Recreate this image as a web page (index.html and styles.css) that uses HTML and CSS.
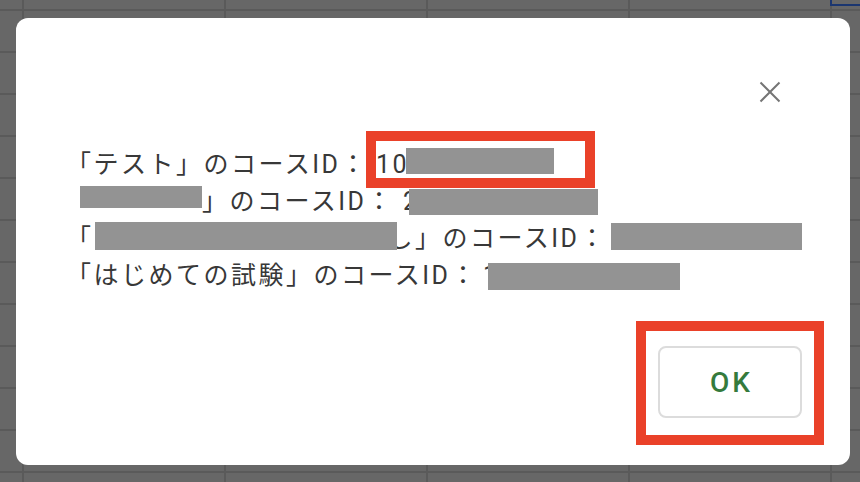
FILE: index.html
```html
<!DOCTYPE html>
<html lang="ja">
<head>
<meta charset="utf-8">
<title>コースID</title>
<link rel="stylesheet" href="styles.css">
</head>
<body>
<div class="screen">
  <div class="selection"></div>
  <div class="dialog">
    <div class="header">
      <button class="close" aria-label="閉じる">
        <svg width="22" height="22" viewBox="0 0 22 22"><path d="M1.5 1.5L20.5 20.5M20.5 1.5L1.5 20.5" stroke="#757575" stroke-width="2" fill="none"/></svg>
      </button>
    </div>
    <div class="content">
      <div class="line line-marked">「テスト」のコースID：<span class="id id1">10</span><span class="redact r1"></span><span class="mark"></span></div>
      <div class="line"><span class="redact r2a"></span>」のコースID：<span class="id id2">2</span><span class="redact r2b"></span></div>
      <div class="line">「<span class="redact r3a"></span>し」のコースID：<span class="redact r3b"></span></div>
      <div class="line">「はじめての試験」のコースID：<span class="id id4">1</span><span class="redact r4"></span></div>
    </div>
    <div class="footer">
      <div class="mark-box">
        <button class="ok">OK</button>
      </div>
    </div>
  </div>
</div>
</body>
</html>
```

FILE: styles.css
```css
* { box-sizing: border-box; }
html, body { margin: 0; padding: 0; }
body { width: 860px; height: 482px; overflow: hidden; }

.screen {
  position: relative;
  width: 860px;
  height: 482px;
  padding: 18px 10px 17px 16px;
  background:
    repeating-linear-gradient(to bottom, transparent 0 9px, #5a5a5a 9px 11px, transparent 11px 42px),
    repeating-linear-gradient(to right, transparent 0 22px, #5a5a5a 22px 24px, transparent 24px 202px),
    #676767;
  overflow: hidden;
}

.selection {
  position: absolute;
  left: 830px;
  top: -30px;
  width: 60px;
  height: 36px;
  border: 2.5px solid #1b3670;
}

.dialog {
  height: 447px;
  background: #fff;
  border-radius: 12px;
  display: flex;
  flex-direction: column;
}

.header {
  display: flex;
  justify-content: flex-end;
  padding: 63px 69px 0 0;
}
.close {
  width: 22px;
  height: 22px;
  padding: 0;
  margin: 0;
  border: 0;
  background: none;
  display: block;
}
.close svg { display: block; }

.content {
  margin-top: 43px;
  padding-left: 50px;
  font-family: Roboto, "Noto Sans CJK JP", sans-serif;
  font-size: 25px;
  letter-spacing: 2.5px;
  line-height: 37px;
  color: #383838;
  white-space: nowrap;
}
.line { height: 37px; }
.line-marked { position: relative; }
.id1 { margin-left: 8px; }
.id2 { margin-left: 9px; }
.id4 { margin-left: 5px; }

.redact {
  position: relative;
  display: inline-block;
  background: #939393;
}
.r1 { width: 148px; height: 26px; vertical-align: -1px; margin-left: -3px; }
.r2a { width: 122px; height: 22px; vertical-align: 2px; margin-left: 14px; }
.r2b { width: 189px; height: 26px; vertical-align: -5px; margin-left: -11px; }
.r3a { width: 302px; height: 28px; vertical-align: -3px; margin-left: 1px; margin-right: -9px; }
.r3b { width: 191px; height: 27px; vertical-align: -3px; margin-left: 4px; }
.r4 { width: 192px; height: 27px; vertical-align: -6px; margin-left: -12px; }

.mark {
  position: absolute;
  left: 300px;
  top: -15px;
  width: 229px;
  height: 57px;
  border: 10px solid #ea4129;
}

.footer {
  margin-top: 27px;
  display: flex;
  justify-content: flex-end;
  padding-right: 26px;
}
.mark-box {
  border: 10px solid #ea4129;
  padding: 15px 12px 17px 12px;
}
.ok {
  width: 144px;
  height: 72px;
  display: block;
  background: #fff;
  border: 2px solid #dcdcdc;
  border-radius: 8px;
  font-family: Roboto, sans-serif;
  font-weight: 500;
  font-size: 28px;
  letter-spacing: 3px;
  color: #357a3c;
  padding: 0 0 0 3px;
}
```
